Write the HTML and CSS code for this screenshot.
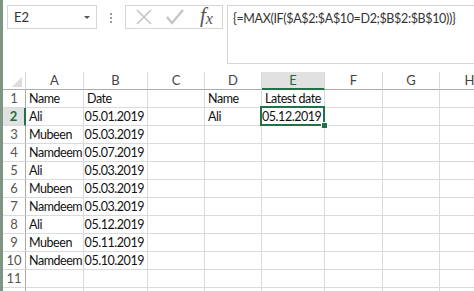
FILE: index.html
```html
<!DOCTYPE html>
<html><head><title>Latest date</title><meta charset="utf-8">
<link rel="stylesheet" href="styles.css"></head><body>
<div class="app">
  <div class="edge"></div>
  <div class="main">
    <div class="fbar">
      <div class="namebox"><span>E2</span><span class="drop"></span></div>
      <div class="dots"><i></i><i></i><i></i></div>
      <div class="fxbox">
        <svg class="ico" width="16" height="16" viewBox="0 0 16 16"><path d="M1 1 L15 15 M15 1 L1 15" stroke="#c4c4c4" stroke-width="1.6" fill="none"/></svg>
        <svg class="ico" width="18" height="16" viewBox="0 0 18 16"><path d="M1 8 L6 14 L17 1" stroke="#c4c4c4" stroke-width="2.2" fill="none"/></svg>
        <span class="fx">f<sub>x</sub></span>
      </div>
      <div class="formula">{=MAX(IF($A$2:$A$10=D2;$B$2:$B$10))}</div>
    </div>
    <div class="grid">
      <div class="hd corner"><b></b></div>
      <div class="hd">A</div><div class="hd">B</div><div class="hd">C</div><div class="hd">D</div>
      <div class="hd on">E</div><div class="hd">F</div><div class="hd">G</div><div class="hd">H</div>

      <div class="rn">1</div><div class="c">Name</div><div class="c">Date</div><div class="c"></div><div class="c">Name</div><div class="c">Latest date</div><div class="c"></div><div class="c"></div><div class="c"></div>
      <div class="rn on">2</div><div class="c">Ali</div><div class="c r">05.01.2019</div><div class="c"></div><div class="c">Ali</div><div class="c r sel">05.12.2019</div><div class="c"></div><div class="c"></div><div class="c"></div>
      <div class="rn">3</div><div class="c">Mubeen</div><div class="c r">05.03.2019</div><div class="c"></div><div class="c"></div><div class="c"></div><div class="c"></div><div class="c"></div><div class="c"></div>
      <div class="rn">4</div><div class="c">Namdeem</div><div class="c r">05.07.2019</div><div class="c"></div><div class="c"></div><div class="c"></div><div class="c"></div><div class="c"></div><div class="c"></div>
      <div class="rn">5</div><div class="c">Ali</div><div class="c r">05.03.2019</div><div class="c"></div><div class="c"></div><div class="c"></div><div class="c"></div><div class="c"></div><div class="c"></div>
      <div class="rn">6</div><div class="c">Mubeen</div><div class="c r">05.03.2019</div><div class="c"></div><div class="c"></div><div class="c"></div><div class="c"></div><div class="c"></div><div class="c"></div>
      <div class="rn">7</div><div class="c">Namdeem</div><div class="c r">05.03.2019</div><div class="c"></div><div class="c"></div><div class="c"></div><div class="c"></div><div class="c"></div><div class="c"></div>
      <div class="rn">8</div><div class="c">Ali</div><div class="c r">05.12.2019</div><div class="c"></div><div class="c"></div><div class="c"></div><div class="c"></div><div class="c"></div><div class="c"></div>
      <div class="rn">9</div><div class="c">Mubeen</div><div class="c r">05.11.2019</div><div class="c"></div><div class="c"></div><div class="c"></div><div class="c"></div><div class="c"></div><div class="c"></div>
      <div class="rn">10</div><div class="c">Namdeem</div><div class="c r">05.10.2019</div><div class="c"></div><div class="c"></div><div class="c"></div><div class="c"></div><div class="c"></div><div class="c"></div>
      <div class="rn">11</div><div class="c"></div><div class="c"></div><div class="c"></div><div class="c"></div><div class="c"></div><div class="c"></div><div class="c"></div><div class="c"></div>
      <div class="rn"></div><div class="c"></div><div class="c"></div><div class="c"></div><div class="c"></div><div class="c"></div><div class="c"></div><div class="c"></div><div class="c"></div>
    </div>
  </div>
</div>
</body></html>
```
FILE: styles.css
```css
body { margin: 0; background: #fff; font-family: Lato, "Liberation Sans", sans-serif; color: #111; overflow: hidden; }
.app { display: flex; height: 291px; }
.edge { width: 3px; flex: none; background: #7d9583; }
.main { flex: 1; min-width: 0; overflow: hidden; }

.fbar { display: flex; align-items: flex-start; padding-top: 5px; height: 67px; box-sizing: border-box; }
.namebox { flex: none; margin-left: 4px; width: 90px; height: 24px; box-sizing: border-box; border: 1px solid #d6d6d6;
	display: flex; align-items: center; justify-content: space-between; padding: 0 6px 0 6px; font-size: 13px; color: #333; }
.drop { width: 0; height: 0; border-left: 3px solid transparent; border-right: 3px solid transparent; border-top: 3px solid #555; }
.dots { flex: none; width: 28px; display: flex; flex-direction: column; align-items: center; gap: 2px; padding-top: 8px; }
.dots i { width: 2px; height: 2px; background: #9a9a9a; }
.fxbox { flex: none; width: 98px; height: 24px; box-sizing: border-box; border: 1px solid #d6d6d6; display: flex; align-items: center;
	gap: 14px; padding-left: 10px; }
.ico { display: block; }
.fx { font-family: "Liberation Serif", serif; font-style: italic; font-size: 21px; color: #555; line-height: 20px; margin-left: 2px; }
.fx sub { font-size: 16px; vertical-align: -2px; }
.formula { margin-left: 4px; flex: 1; min-width: 0; height: 59px; box-sizing: border-box; border: 1px solid #d6d6d6; border-right: 0;
	padding: 5px 0 0 5px; font-size: 12.5px; letter-spacing: -0.35px; color: #333; white-space: nowrap; }

.grid { display: grid; grid-template-columns: 23px 58px 64px 57px 57px 63px 58px 57px 60px; grid-auto-rows: 18px; margin-top: 5px; }
.grid > div { box-sizing: border-box; border-right: 1px solid #dadada; border-bottom: 1px solid #dadada;
	font-size: 12.5px; letter-spacing: -0.45px; line-height: 17px; white-space: nowrap; overflow: hidden; }
.grid > .hd { font-size: 13px; letter-spacing: 0; }
.hd { text-align: center; color: #444; background: #fff; border-bottom-color: #ababab !important; }
.hd.on { background: #e1e1e1; color: #1e6b40; border-bottom: 2px solid #217346 !important; }
.corner { position: relative; }
.corner b { position: absolute; right: 3px; bottom: 2px; width: 0; height: 0;
	border-left: 10px solid transparent; border-bottom: 10px solid #dcdcdc; }
.grid > .rn { text-align: center; color: #555; font-size: 13px; letter-spacing: 0; border-right-color: #ababab; }
.grid > .rn.on { background: #e1e1e1; color: #1e6b40; font-weight: bold; border-right: 2px solid #217346; }
.c { padding-left: 3px; }
.r { text-align: right; padding: 0 3px 0 0; }
.sel { position: relative; overflow: visible !important; }
.sel::after { content: ""; position: absolute; left: -2px; top: -2px; right: -1px; bottom: -1px; border: 2px solid #217346; }
.sel::before { content: ""; position: absolute; right: -4px; bottom: -4px; width: 5px; height: 5px; background: #217346;
	border: 1px solid #fff; z-index: 1; }
```
